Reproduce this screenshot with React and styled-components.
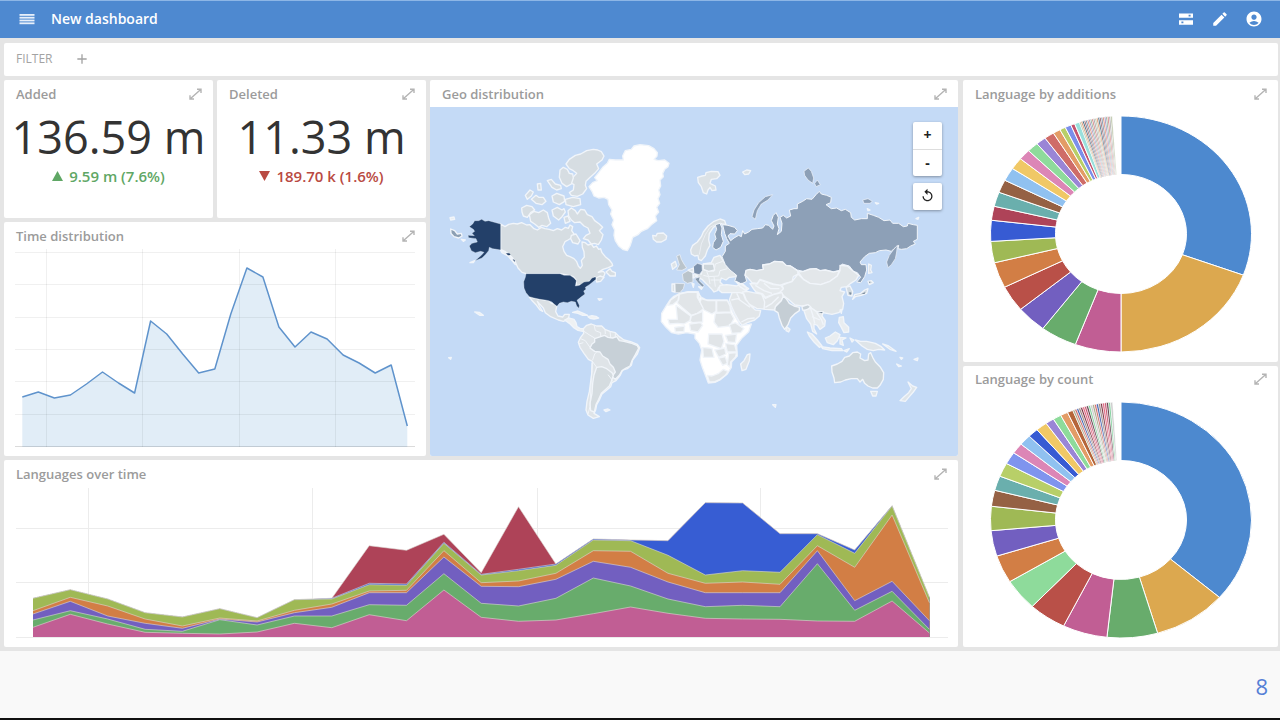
import React from 'react';
import styled, { createGlobalStyle } from 'styled-components';
import { MdAdd, MdEdit, MdAccountCircle, MdReplay } from 'react-icons/md';

const GlobalStyle = createGlobalStyle`
  * {
    box-sizing: border-box;
  }

  body {
    margin: 0;
    background: #f9f9f9;
    font-family: 'Open Sans', 'Noto Sans', sans-serif;
  }

  button {
    display: flex;
    align-items: center;
    justify-content: center;
    border: 0;
    padding: 0;
    background: none;
    color: inherit;
    font: inherit;
    cursor: pointer;
  }
`;

const Page = styled.div`
  display: flex;
  flex-direction: column;
  min-height: 100vh;
`;

const TopBar = styled.header`
  display: flex;
  align-items: center;
  height: 38px;
  padding: 0 17px 2px 19px;
  border-top: 1px solid #8db6e6;
  background: #4e89d0;
  color: #fff;
`;

const PageTitle = styled.h1`
  flex: 1;
  margin: 0 0 0 16px;
  font-size: 14px;
  line-height: 20px;
  font-weight: 600;
`;

const Actions = styled.div`
  display: flex;
  gap: 16px;
`;

const Dashboard = styled.main`
  display: flex;
  flex-direction: column;
  gap: 4px;
  padding: 5px 2px 4px 4px;
  background: #e5e5e5;
`;

const FilterBar = styled.div`
  display: flex;
  align-items: center;
  gap: 21px;
  height: 33px;
  padding: 0 12px 2px;
  border-radius: 2px;
  background: #fff;
  color: #a3a3a3;
  font-size: 12px;
`;

const Board = styled.div`
  display: grid;
  grid-template-columns: 954fr 315fr;
  gap: 5px;
`;

const Column = styled.div`
  display: flex;
  flex-direction: column;
  gap: 4px;
  min-width: 0;
`;

const Overview = styled.div`
  display: grid;
  grid-template-columns: 422fr 528fr;
  gap: 4px;
`;

const Stats = styled.div`
  display: grid;
  grid-template-columns: 1fr 1fr;
  gap: 4px;
`;

const CardBox = styled.section`
  flex: 1 1 auto;
  min-width: 0;
  border-radius: 2px;
  background: #fff;
  overflow: hidden;
`;

const CardHeader = styled.div`
  display: flex;
  align-items: center;
  justify-content: space-between;
  height: 27px;
  padding: 0 11px 0 12px;
  color: #b4b4b4;
`;

const CardTitle = styled.h2`
  margin: 0;
  color: #9b9b9b;
  font-size: 13px;
  line-height: 20px;
  font-weight: 600;
`;

const Chart = styled.svg`
  display: block;
  width: 100%;
  height: auto;
`;

const StatBody = styled.div`
  display: flex;
  flex-direction: column;
  align-items: center;
  padding-bottom: 32px;
  white-space: nowrap;
`;

const StatValue = styled.div`
  color: #333;
  font-size: 45px;
  line-height: 59px;
`;

const StatChange = styled.div`
  display: flex;
  align-items: center;
  gap: 6px;
  color: ${props => (props.$up ? '#5fa765' : '#b94a42')};
  font-size: 15px;
  line-height: 20px;
  font-weight: 600;
`;

const MapBody = styled.div`
  position: relative;
  background: #c4daf6;
`;

const MapControls = styled.div`
  position: absolute;
  top: 15px;
  right: 16px;
  display: flex;
  flex-direction: column;
  gap: 7px;
  width: 29px;
`;

const ControlGroup = styled.div`
  border-radius: 2px;
  background: #fff;
  box-shadow: 0 1px 3px rgba(0, 0, 0, 0.35);
  color: #222;
  font-size: 14px;
  font-weight: 700;

  button {
    width: 100%;
    height: 27px;
    padding-bottom: 2px;
  }

  button + button {
    border-top: 1px solid #ddd;
  }
`;

const Footer = styled.footer`
  display: flex;
  flex: 1;
  align-items: center;
  justify-content: flex-end;
  min-height: 60px;
  padding: 2px 12px 0;
  border-bottom: 2px solid #111;
  background: #f9f9f9;
  color: #557fd6;
  font-size: 22px;
  line-height: 30px;
`;

const MenuIcon = () => (
  <svg width="16" height="12" viewBox="0 0 16 12" fill="#e6effa">
    <rect x="0.5" y="1" width="15" height="1.8" />
    <rect x="0.5" y="3.8" width="15" height="1.8" />
    <rect x="0.5" y="6.6" width="15" height="1.8" />
    <rect x="0.5" y="9.4" width="15" height="1.8" />
  </svg>
);

const WidgetsIcon = () => (
  <svg width="18" height="18" viewBox="0 0 18 18">
    <path
      fill="#fff"
      fillRule="evenodd"
      d="M2 3.5h14v4.3H2zM11.6 4.8v1.7h2V4.8zM2 10.3h14v4.4H2zM4.4 11.6v1.7h2v-1.7z"
    />
  </svg>
);

const ExpandIcon = () => (
  <svg
    width="13"
    height="12"
    viewBox="0 0 13 12"
    fill="none"
    stroke="currentColor"
    strokeWidth="1.4"
  >
    <path d="M8 1.2h4v3.8M12 1.2L1 11M1 7.2v3.8h4" />
  </svg>
);

const timeline = [
  148, 143, 149, 146, 135, 123, 134, 144, 72, 85, 105, 124, 120, 65, 19, 28, 78,
  98, 83, 90, 106, 114, 124, 116, 177
];

// Tops of the stacked bands, back to front
const bands = [
  {
    color: '#ae4358',
    tops: [
      415, 389, 417, 458, 471, 446, 473, 419, 415, 257, 271, 223, 338, 140, 312,
      237, 240, 242, 128, 129, 221, 221, 270, 137, 412
    ]
  },
  {
    color: '#375dd3',
    tops: [
      415, 389, 417, 458, 471, 446, 473, 419, 415, 370, 372, 247, 343, 328, 312,
      237, 240, 242, 128, 129, 221, 221, 270, 137, 412
    ]
  },
  {
    color: '#9fb955',
    tops: [
      415, 389, 417, 458, 471, 446, 473, 419, 417, 374, 376, 250, 345, 332, 316,
      240, 242, 286, 345, 332, 337, 224, 280, 138, 412
    ]
  },
  {
    color: '#d27e45',
    tops: [
      452, 412, 438, 477, 498, 474, 483, 451, 432, 393, 391, 272, 368, 363, 340,
      272, 274, 340, 370, 366, 373, 257, 322, 165, 428
    ]
  },
  {
    color: '#725fc0',
    tops: [
      462, 424, 468, 490, 505, 477, 486, 458, 442, 398, 398, 291, 379, 380, 358,
      304, 322, 366, 398, 398, 398, 272, 422, 364, 482
    ]
  },
  {
    color: '#68ac6c',
    tops: [
      480, 452, 477, 508, 514, 479, 495, 468, 468, 434, 436, 341, 430, 438, 415,
      354, 378, 417, 440, 436, 440, 311, 451, 394, 508
    ]
  },
  {
    color: '#c15e94',
    tops: [
      502, 463, 492, 517, 520, 522, 516, 490, 503, 464, 482, 390, 472, 484, 480,
      461, 441, 460, 475, 477, 478, 483, 484, 423, 519
    ]
  }
];

// [colour, end angle]
const additions = [
  ['#4d89cf', 110.4],
  ['#dca84f', 180],
  ['#c15e94', 200.5],
  ['#68ac6c', 216.8],
  ['#725fc0', 230.3],
  ['#b95048', 243.2],
  ['#d27e45', 255.9],
  ['#9fb955', 266.4],
  ['#375bd3', 276.7],
  ['#ae4358', 283.6],
  ['#6aafad', 290.7],
  ['#956144', 297.1],
  ['#90c1f0', 303.7],
  ['#f0c866', 309.6],
  ['#dc86b6', 314.9],
  ['#8edb9b', 319.9],
  ['#9a85d6', 324.4],
  ['#cf6c68', 328.8],
  ['#e39c66', 332.1],
  ['#b8cf68', 334.7],
  ['#7b8fea', 337.4],
  ['#c5536e', 339.2],
  ['#9ae0dc', 341.4]
];

const counts = [
  ['#4d89cf', 131],
  ['#dca84f', 163.7],
  ['#68ac6c', 186.2],
  ['#c15e94', 206.1],
  ['#b95048', 222.9],
  ['#8edb9b', 238.5],
  ['#d27e45', 252.2],
  ['#725fc0', 264.8],
  ['#9fb955', 276.7],
  ['#956144', 284.6],
  ['#6aafad', 291.8],
  ['#b8cf68', 298.6],
  ['#7f94ee', 304.7],
  ['#dc86b6', 310],
  ['#90c1f0', 315.3],
  ['#375bd3', 319.9],
  ['#f0c866', 325],
  ['#9a85d6', 328.8],
  ['#8edb9b', 332.5],
  ['#e39c66', 335.8],
  ['#b5653a', 338.3]
];

const smallAdditions = [
  '#b5bfa0', '#d98a5c', '#24506b', '#8a4c58', '#5f7f9a', '#d8795f', '#8e7fb8',
  '#7fa58a', '#d06f6f', '#9a9a9a'
];

const smallCounts = [
  '#a9a98a', '#cf6c68', '#3f5fae', '#9b8a84', '#7a3140', '#e0607c', '#c5536e',
  '#5c3a48', '#7fcf9b', '#c9c9c9'
];

const addSmallSlices = (slices, colors, step) => {
  const all = [...slices];
  let angle = slices[slices.length - 1][1];
  let i = 0;
  while (angle + step < 356.4) {
    angle += step;
    all.push([colors[i % colors.length], angle]);
    i += 1;
  }
  return all;
};

const arcPoint = (angle, rx, ry) => {
  const rad = (angle * Math.PI) / 180;
  return `${(158 + rx * Math.sin(rad)).toFixed(2)} ${(127 - ry * Math.cos(rad)).toFixed(2)}`;
};

const slicePath = (from, to) => {
  const large = to - from > 180 ? 1 : 0;
  return (
    `M${arcPoint(from, 130.5, 118)}A130.5 118 0 ${large} 1 ${arcPoint(to, 130.5, 118)}` +
    `L${arcPoint(to, 65.5, 59.5)}A65.5 59.5 0 ${large} 0 ${arcPoint(from, 65.5, 59.5)}Z`
  );
};

const Donut = ({ slices }) => (
  <Chart viewBox="0 0 315 254" stroke="#fff">
    {slices.map(([color, end], i) => {
      const start = i === 0 ? 0 : slices[i - 1][1];
      return (
        <path
          key={end}
          d={slicePath(start, end)}
          fill={color}
          strokeWidth={end - start > 1.5 ? 1 : 0.6}
        />
      );
    })}
  </Chart>
);

const TimeChart = () => {
  const points = timeline.map((y, i) => `${(18.3 + i * 16.04).toFixed(1)},${y}`);
  return (
    <Chart viewBox="0 0 422 207">
      <polygon points={`18.3,198 ${points.join(' ')} 403.3,198`} fill="#e1edf7" />
      <g stroke="#000" strokeOpacity="0.06">
        {[3, 35, 68, 100, 132, 165].map(y => (
          <path key={y} d={`M11 ${y}.5H411`} />
        ))}
        {[42, 138, 235, 331].map(x => (
          <path key={x} d={`M${x}.5 0V198`} />
        ))}
        <path d="M11 197.5H411" strokeOpacity="0.14" />
      </g>
      <polyline
        points={points.join(' ')}
        fill="none"
        stroke="#5f93cc"
        strokeWidth="1.5"
        strokeLinejoin="round"
      />
    </Chart>
  );
};

const LanguagesChart = () => (
  <Chart viewBox="0 0 954 160">
    <g stroke="#ececec">
      {[41, 95, 150].map(y => (
        <path key={y} d={`M12 ${y}.5H944`} />
      ))}
      {[84, 308, 533, 756].map(x => (
        <path key={x} d={`M${x}.5 1V150`} />
      ))}
    </g>
    {bands.map(({ color, tops }) => {
      const line = tops
        .map((y, i) => `${(29 + i * 37.35).toFixed(1)},${(y / 3 - 27).toFixed(1)}`)
        .join(' ');
      return (
        <g key={color}>
          <polygon points={`29,150 ${line} 925.4,150`} fill={color} />
          <polyline points={line} fill="none" stroke="#dcd8d4" strokeOpacity="0.6" />
        </g>
      );
    })}
  </Chart>
);

const NorthAmerica = () => (
  <g transform="translate(0 9)">
    <g fill="#d6dde2">
      <path d="M212 342L225 350 236 343 250 340 262 342 275 338 290 345 300 344 312 356 322 360 334 352 345 356 358 358 370 362 382 356 395 360 406 352 415 355 420 345 428 350 425 362 432 372 424 384 414 390 405 395 398 410 402 424 410 436 420 440 432 446 440 455 445 468 451 475 457 466 454 452 463 441 462 425 457 412 456 396 466 398 474 405 484 402 491 412 499 408 506 418 512 416 516 428 526 440 538 450 546 460 548 467 535 473 519 478 505 487 520 484 525 490 522 498 510 508 500 512 496 500 480 512 465 522 440 527 438 510 430 500 410 495 390 491 288 491 276 487 264 474 257 458 248 444 238 434 226 425 212 418Z" />
      <path d="M470 122L490 118 503 120 514 125 522 138 516 150 500 162 506 176 494 190 478 204 468 214 466 226 470 236 458 252 442 259 424 256 418 248 430 240 432 224 418 216 426 205 440 190 430 182 418 176 408 162 418 148 436 136 452 132Z" />
      <path d="M390 180L400 172 412 178 418 190 428 192 430 204 424 222 410 230 396 220 388 202Z" />
      <path d="M414 302L424 294 436 302 442 312 452 298 464 300 472 314 486 320 494 332 508 342 518 352 508 362 519 374 514 390 505 404 494 400 484 402 474 390 460 386 468 376 480 370 474 354 462 348 450 336 434 338 424 330 416 318Z" />
      <path d="M298 314L312 304 326 308 340 300 352 308 356 324 362 340 350 350 336 346 326 352 314 342 302 334Z" />
      <path d="M275 294L290 286 306 290 314 300 302 308 292 322 280 318 276 306Z" />
      <path d="M286 256L300 240 310 246 304 258 292 268Z" />
      <path d="M304 268L318 256 326 262 340 262 348 274 336 284 318 280Z" />
      <path d="M352 212L364 208 376 222 392 226 394 236 380 240 366 232Z" />
      <path d="M322 222L332 220 334 240 324 240Z" />
      <path d="M366 258L380 250 402 258 404 274 388 284 370 276Z" />
      <path d="M406 268L428 262 450 266 452 284 430 290 408 284Z" />
      <path d="M366 300L382 292 396 300 402 296 406 306 396 320 386 330 370 318Z" />
      <path d="M402 322L414 318 420 334 406 340Z" />
      <path d="M424 376L438 372 450 392 444 402 428 398 422 386Z" />
      <path d="M528 486L540 476 546 484 556 488 556 498 540 498Z" />
      <path d="M498 504L510 498 522 502 512 514 500 516Z" />
    </g>
    <path
      fill="#fff"
      d="M477 230L488 218 502 212 494 203 506 188 520 170 532 160 538 148 556 150 580 150 578 138 586 122 604 118 612 108 630 104 656 107 672 116 682 128 681 138 672 148 684 152 704 150 717 160 714 170 704 178 698 190 700 200 690 210 692 228 686 240 690 254 684 266 689 280 680 292 686 306 676 318 680 332 664 344 652 356 634 364 624 374 608 382 604 396 600 408 592 422 580 419 566 408 556 392 552 376 554 360 546 344 551 330 542 312 546 300 536 284 534 268 522 262 506 264 492 258 486 244Z"
    />
    <path
      fill="#234069"
      strokeWidth="1"
      d="M212 342L190 336 176 332 165 334 155 328 146 332 134 332 128 342 118 350 130 358 134 364 126 370 133 377 114 376 116 383 138 386 142 396 126 400 118 408 124 422 136 428 152 424 162 427 154 436 142 446 135 452 156 444 166 434 176 422 178 412 188 416 200 418 212 420Z"
    />
    <path fill="#8c9fb3" d="M62 357L74 362 82 372 94 370 96 378 86 384 72 380 63 370Z" />
    <path fill="#e8edf1" d="M60 323L72 321 74 328 62 330ZM94 388L106 390 100 394ZM120 458L134 452 130 458ZM212 421L228 427 240 436 250 452 256 464 246 452 234 438 216 428Z" />
    <path fill="#234069" stroke="none" d="M228 430L238 430 242 435 234 436ZM248 448L254 450 254 456Z" />
    <path fill="#dbe1e5" d="M668 376L678 378 682 370 700 369 710 378 708 388 694 396 680 396 670 388Z" />
  </g>
);

const LatinAmerica = () => (
  <g transform="translate(0 459)">
    <path
      fill="#dae0e4"
      d="M298 111L312 114 330 118 345 120 357 122 364 130 374 132 380 140 377 155 384 168 398 171 404 163 418 163 416 172 408 181 400 184 385 180 362 170 346 158 340 144 328 131 322 124 328 138 338 154 330 150 318 134 308 124Z"
    />
    <path
      fill="#eef1f3"
      d="M404 180L416 174 432 178 438 188 441 200 450 205 464 206 458 214 444 211 430 202 418 190ZM428 157L444 153 460 160 473 166 458 166 444 160ZM474 170L486 167 498 169 506 174 492 177 480 175ZM134 156L148 157 160 166 150 166ZM522 450L534 447 540 450 528 455ZM56 293L64 292 62 298ZM504 116L516 117 508 121Z"
    />
    <path
      fill="#dfe4e8"
      d="M460 206L470 196 484 192 500 198 515 198 525 208 540 214 556 218 568 230 582 240 602 245 622 253 629 263 622 282 608 300 604 316 592 326 578 330 570 347 558 362 546 368 542 380 528 392 516 402 509 418 500 434 497 450 492 460 508 470 490 475 474 465 468 450 471 424 478 395 482 365 486 335 487 304 475 298 462 280 450 262 445 247 452 232 461 220Z"
    />
    <path
      fill="#c7d0d7"
      d="M512 230L524 226 534 232 548 234 560 230 568 242 582 244 602 249 622 257 626 265 616 284 606 302 600 318 588 324 576 332 568 346 556 358 546 350 556 336 550 322 540 312 534 298 518 288 510 276 494 274 480 264 486 252 494 246 494 236Z"
    />
    <path
      fill="#d5dce0"
      d="M500 322L515 320 530 326 546 338 550 346 544 364 538 378 525 390 514 400 506 418 498 434 493 456 482 452 480 430 486 400 488 370 492 345Z"
    />
    <path
      fill="none"
      strokeWidth="3"
      d="M462 214L480 226 494 234M492 194L496 212 512 218 512 230M525 208L526 222M540 214L542 232M556 218L556 232M452 236L466 242 480 262M446 252L460 248M488 300L494 282 500 276M487 304L500 322M486 308L480 440 474 462M534 344L548 362"
    />
    <path
      fill="#234069"
      strokeWidth="1"
      d="M288 41L390 41 402 46 420 46 432 54 439 62 436 78 448 76 462 66 478 64 486 54 497 50 498 58 488 66 478 74 466 82 468 88 461 93 465 102 452 112 441 121 448 136 447 145 440 138 436 126 424 124 412 128 400 126 388 130 381 139 372 132 366 126 356 122 345 120 330 118 312 114 298 110 288 98 282 84 281 65 286 52Z"
    />
  </g>
);

const Eurasia = () => (
  <g transform="translate(630 99)">
    <path
      fill="#dce2e6"
      d="M173 112L186 108 196 106 198 98 214 94 234 95 240 106 230 116 214 118 210 130 226 138 228 150 216 152 210 142 204 150 200 162 190 158 184 140 175 128ZM308 96L320 90 332 92 326 102 314 104Z"
    />
    <path
      fill="#dae0e4"
      d="M152 330L158 316 172 306 184 290 190 276 204 258 222 244 240 237 254 242 258 254 246 252 240 250 230 256 220 262 208 280 206 300 210 316 202 330 196 348 184 362 176 358 174 346 164 348 154 342Z"
    />
    <path fill="none" strokeWidth="2" d="M178 344L184 312 196 284 210 262 226 254" />
    <path
      fill="#8da0b7"
      strokeWidth="3"
      d="M226 254L240 250 246 264 244 284 250 304 242 322 228 330 218 322 220 308 228 296 224 282 230 268Z"
    />
    <path
      fill="#e1e6e9"
      d="M190 372L214 368 222 352 240 346 248 360 262 382 284 398 290 410 268 412 258 420 244 414 240 426 250 436 236 442 232 452 222 456 214 446 204 436 196 428 186 418 166 408 164 400 184 402Z"
    />
    <path
      fill="none"
      strokeWidth="3"
      d="M190 390L222 394 226 372 248 364M200 394L206 410 236 408 240 392 262 386M206 410L210 432M222 410L226 440M190 406L206 410M212 420L240 420"
    />
    <path fill="#cdd5da" d="M190 372L220 372 224 390 206 394 190 388Z" />
    <path fill="#7d92ac" strokeWidth="2" d="M160 380L172 370 186 374 187 392 178 404 162 400Z" />
    <path fill="#bac4cb" strokeWidth="2" d="M127 402L144 392 158 398 159 426 142 430 130 422ZM104 430L134 431 130 446 120 458 106 458ZM110 348L120 344 124 358 132 372 140 384 126 391 110 390 118 374Z" />
    <path fill="#dde3e7" d="M94 372L106 364 110 378 98 388ZM96 432L104 432 104 456 96 454ZM144 390L160 384 160 398ZM160 404L172 406 160 414Z" />
    <path fill="#8699ad" strokeWidth="2" d="M164 416L180 410 178 422 192 436 188 442 174 428Z" />
    <path fill="#e8ecef" d="M176 440L188 442 184 448ZM156 430L162 432 160 442Z" />
    <path
      fill="#8da0b7"
      strokeWidth="3"
      d="M248 254L264 256 284 262 292 272 284 282 270 281 264 288 272 302 282 294 296 286 304 290 308 272 314 282 326 276 336 268 352 266 368 264 376 254 386 256 398 268 402 258 394 242 400 226 408 218 415 232 412 252 417 266 412 284 424 274 426 250 420 232 430 226 440 234 452 228 448 210 462 206 472 206 472 192 488 184 500 176 516 178 528 164 538 154 544 162 560 166 574 172 572 188 558 194 574 206 590 204 604 212 616 208 632 218 634 232 644 240 664 236 682 236 682 220 700 226 716 232 732 242 750 240 758 250 776 250 790 260 802 258 804 250 820 254 832 256 832 298 820 304 826 312 812 318 800 326 784 328 774 326 776 316 762 326 754 334 738 330 718 332 706 338 688 340 674 350 660 366 664 374 678 374 680 390 674 410 662 428 650 426 662 412 652 398 640 394 628 378 606 372 598 392 580 396 556 390 540 392 528 386 510 388 490 394 472 390 452 378 438 376 428 366 404 364 388 372 368 374 370 388 350 392 330 388 318 392 315 406 320 424 304 432 284 424 290 406 270 390 256 374 246 350 256 334 256 318 268 310 260 296 254 280Z"
    />
    <path fill="#8da0b7" strokeWidth="2" d="M772 316L770 336 766 356 754 374 744 383 740 366 748 346 758 332Z" />
    <path fill="#8da0b7" strokeWidth="2" d="M336 230L342 210 356 188 376 170 398 164 384 180 364 192 352 212 346 238Z" />
    <path fill="#8da0b7" strokeWidth="2" d="M492 94L505 84 514 94 521 114 518 130 504 120 494 106ZM524 130L532 120 541 134 528 140ZM668 180L684 176 697 184 690 190 672 190Z" />
    <path fill="#e8edf1" d="M706 188L716 190 710 192ZM682 206L690 210 684 212ZM828 236L836 232 834 238Z" />
    <path
      fill="#e0e5e8"
      d="M315 406L318 391 330 388 350 392 370 388 368 375 388 372 404 364 428 366 438 376 452 378 474 394 474 402 460 410 456 425 435 430 420 436 400 432 380 425 360 418 352 430 336 428 325 415Z"
    />
    <path
      fill="#e3e7ea"
      d="M474 396L490 394 510 387 528 386 540 392 556 390 580 396 598 392 592 408 570 424 542 434 510 430 490 418Z"
    />
    <path
      fill="#e1e6e9"
      d="M426 436L440 430 456 425 474 402 490 418 510 430 542 434 570 424 592 408 600 392 600 376 622 378 640 394 656 406 648 420 632 430 620 440 604 442 600 452 614 456 606 470 611 490 608 508 596 518 576 523 560 520 545 517 530 515 515 505 505 495 485 498 465 495 445 478 432 468 420 455 430 445Z"
    />
    <path fill="#e5e9ec" d="M330 430L352 432 360 420 380 427 400 434 422 436 430 446 418 458 398 464 376 472 368 462 348 456 340 446Z" />
    <path fill="none" d="M346 436L372 452 396 460M372 430L392 446 418 446" />
    <path fill="#e8ecef" d="M240 436L260 434 290 438 306 430 318 440 320 458 300 460 272 458 246 458 236 450ZM288 424L306 434 326 446 318 452 300 440Z" />
  </g>
);

const AfricaOceania = () => (
  <g transform="translate(630 429)">
    <path
      fill="#e2e6e9"
      d="M308 126L322 124 340 128 364 132 376 145 400 134 426 128 430 140 424 152 410 165 404 180 376 178 350 175 330 164 316 148ZM268 150L276 128 300 128 312 132 318 148 330 166 346 180 362 182 358 198 344 210 322 218 306 226 296 212 284 190 274 168Z"
    />
    <path fill="none" d="M366 134L374 156 372 178M376 172L396 160 416 140M274 150L294 146 330 172M304 216L324 206 344 204M290 130L300 150" />
    <path
      fill="#fff"
      stroke="#eef3fa"
      d="M100 140L120 130 145 125 175 125 180 140 200 150 225 150 262 150 270 165 280 190 295 215 300 228 334 222 326 245 305 265 290 285 292 318 275 335 274 352 262 372 240 390 225 397 205 399 198 380 188 355 180 330 185 300 178 280 165 265 165 252 140 248 115 252 95 248 78 232 64 215 65 190 80 165 90 150Z"
    />
    <g fill="#e1e5e8">
      <path d="M92 150L118 132 116 150 98 164 84 166ZM118 132L145 126 172 127 172 142 180 156 192 176 172 190 154 196 112 160ZM174 128L182 140 176 150Z" />
      <path d="M180 156L184 146 204 152 228 152 228 184 216 192 192 180ZM230 152L262 152 270 168 272 186 230 187ZM226 190L272 188 282 206 270 228 234 232 222 216Z" />
      <path d="M108 166L152 198 150 212 132 222 112 220 88 222 84 208 112 208ZM154 198L188 184 188 216 158 218 150 214ZM148 222L182 218 188 226 174 246 152 242ZM104 232L134 228 132 244 106 246Z" />
      <path d="M268 224L286 218 312 236 302 248 276 250ZM206 252L246 252 252 274 244 296 226 290 204 282ZM256 256L290 252 286 278 264 276ZM256 280L284 284 290 306 262 306Z" />
      <path d="M188 292L216 295 222 322 190 322ZM224 300L254 294 258 312 236 322ZM266 310L290 308 286 322 272 336 270 352 262 344ZM236 324L256 320 262 340 248 346Z" />
      <path d="M202 376L216 378 236 370 250 358 264 364 256 376 240 388 225 395 208 396ZM302 342L312 332 322 314 330 312 328 332 318 358 306 362Z" />
    </g>
    <path
      fill="#c5ced5"
      d="M406 170L424 152 430 138 440 148 448 160 462 168 478 172 478 182 466 190 452 204 444 224 434 238 426 226 418 204 414 188 404 182Z"
    />
    <path fill="#c9d2d8" d="M486 170L504 164 512 170 500 182 488 180Z" />
    <path
      fill="#e7ebee"
      d="M492 182L502 178 514 174 530 186 550 186 546 198 556 212 554 228 540 238 532 226 522 222 522 236 530 252 518 244 512 222 500 206ZM440 230L450 238 446 246 438 242Z"
    />
    <path fill="none" d="M512 176L520 200 524 220M530 188L544 208 550 224M516 200L540 210" />
    <path
      fill="#e9edf0"
      d="M502 246L516 252 532 270 546 288 538 292 522 276 508 258ZM544 290L570 294 604 296 608 302 576 302 548 296ZM556 264L570 258 586 246 600 254 592 272 580 284 562 278ZM600 262L618 264 606 270 610 286 600 282ZM598 202L610 200 612 218 626 232 626 246 612 248 604 232 596 218ZM600 180L606 178 604 190ZM630 264L642 270 636 276ZM612 302L628 296 620 306Z"
    />
    <path
      fill="#dfe5e9"
      d="M646 270L662 274 680 274 706 280 724 290 734 300 716 298 700 302 682 298 666 288ZM728 282L746 288 768 304 750 298ZM780 322L788 324 784 328ZM770 342L784 348 776 350ZM822 328L834 324 832 332ZM692 424L712 424 708 438 698 438ZM804 396L818 408 830 412 820 426 808 440 796 454 780 452 792 440 806 428 814 416ZM398 464L408 464 406 472Z"
    />
    <path
      fill="#cdd6db"
      d="M575 348L592 342 606 334 614 322 628 318 638 308 652 306 662 312 660 324 674 332 684 330 686 312 692 308 698 322 706 336 720 350 731 368 730 388 720 406 712 414 698 414 684 408 674 400 668 388 660 396 652 386 634 386 616 390 602 396 584 398 582 384 576 366Z"
    />
    <path
      fill="#d3dbe1"
      d="M686 42L694 46 692 60 696 68 686 70ZM684 94L694 92 700 98 688 104ZM684 116L680 130 664 136 646 140 638 148 644 134 662 130 674 120ZM618 112L630 108 638 124 636 138 624 136Z"
    />
    <path fill="#7f8f9f" stroke="none" d="M686 95L691 95 690 100ZM664 132L676 126 674 132ZM628 126L635 128 633 134 628 133ZM534 186L548 186 546 190Z" />
  </g>
);

const WorldMap = () => (
  <Chart viewBox="0 0 1584 1047" stroke="#f1f5fa" strokeWidth="4" strokeLinejoin="round">
    <NorthAmerica />
    <LatinAmerica />
    <Eurasia />
    <AfricaOceania />
  </Chart>
);

const Card = ({ title, children }) => (
  <CardBox>
    <CardHeader>
      <CardTitle>{title}</CardTitle>
      <button type="button" aria-label={`Expand ${title}`}>
        <ExpandIcon />
      </button>
    </CardHeader>
    {children}
  </CardBox>
);

const StatCard = ({ title, value, change, up }) => (
  <Card title={title}>
    <StatBody>
      <StatValue>{value}</StatValue>
      <StatChange $up={up}>
        <svg width="11" height="10" viewBox="0 0 11 10" fill="currentColor">
          <path d={up ? 'M5.5 0L11 10H0z' : 'M0 0H11L5.5 10z'} />
        </svg>
        {change}
      </StatChange>
    </StatBody>
  </Card>
);

const App = () => (
  <Page>
    <GlobalStyle />
    <TopBar>
      <button type="button" aria-label="Menu">
        <MenuIcon />
      </button>
      <PageTitle>New dashboard</PageTitle>
      <Actions>
        <button type="button" aria-label="Widgets">
          <WidgetsIcon />
        </button>
        <button type="button" aria-label="Edit">
          <MdEdit size={18} />
        </button>
        <button type="button" aria-label="Account">
          <MdAccountCircle size={18} />
        </button>
      </Actions>
    </TopBar>
    <Dashboard>
      <FilterBar>
        <span>FILTER</span>
        <button type="button" aria-label="Add filter">
          <MdAdd size={16} />
        </button>
      </FilterBar>
      <Board>
        <Column>
          <Overview>
            <Column>
              <Stats>
                <StatCard title="Added" value="136.59 m" change="9.59 m (7.6%)" up />
                <StatCard title="Deleted" value="11.33 m" change="189.70 k (1.6%)" />
              </Stats>
              <Card title="Time distribution">
                <TimeChart />
              </Card>
            </Column>
            <Card title="Geo distribution">
              <MapBody>
                <WorldMap />
                <MapControls>
                  <ControlGroup>
                    <button type="button">+</button>
                    <button type="button">-</button>
                  </ControlGroup>
                  <ControlGroup>
                    <button type="button" aria-label="Reset">
                      <MdReplay size={15} />
                    </button>
                  </ControlGroup>
                </MapControls>
              </MapBody>
            </Card>
          </Overview>
          <Card title="Languages over time">
            <LanguagesChart />
          </Card>
        </Column>
        <Column>
          <Card title="Language by additions">
            <Donut slices={addSmallSlices(additions, smallAdditions, 0.7)} />
          </Card>
          <Card title="Language by count">
            <Donut slices={addSmallSlices(counts, smallCounts, 0.9)} />
          </Card>
        </Column>
      </Board>
    </Dashboard>
    <Footer>8</Footer>
  </Page>
);

export default App;
